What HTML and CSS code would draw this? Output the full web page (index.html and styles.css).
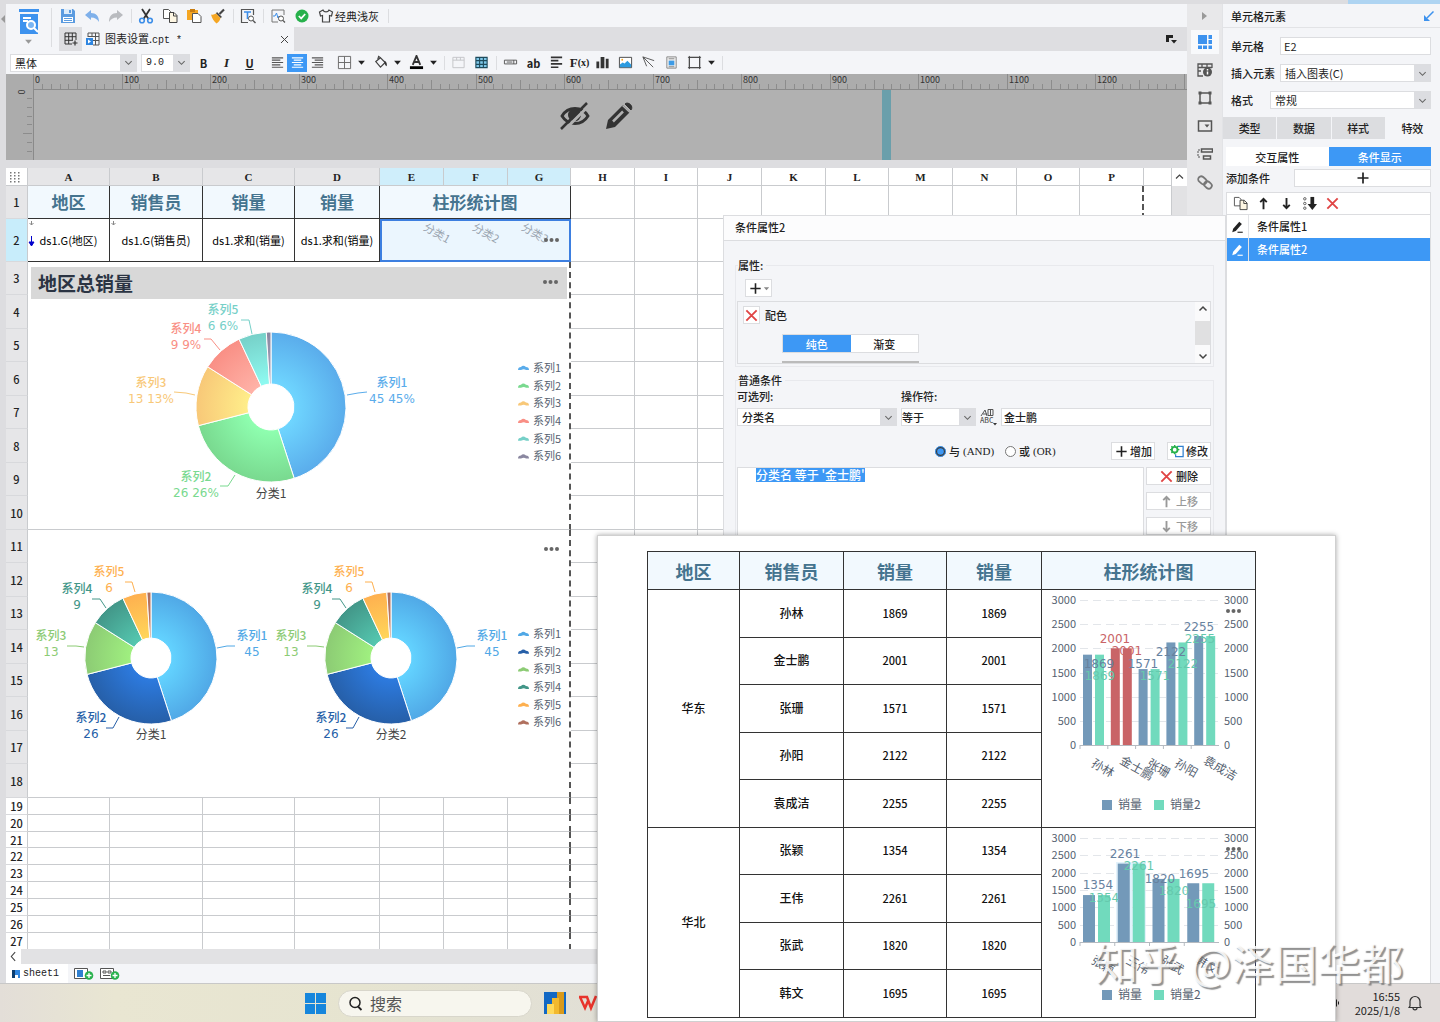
FILE: index.html
```html
<!DOCTYPE html>
<html lang="zh-CN">
<head>
    <meta charset="UTF-8">
    <meta name="viewport" content="width=device-width, initial-scale=1.0">
    <title>图表设置.cpt</title>
    <link rel="stylesheet" href="styles.css">
</head>
<body>
    <svg class="sprite" aria-hidden="true">
        <symbol id="i-chevron" viewBox="0 0 10 10"><path d="M1.500 3.500L5 7l3.500-3.500" fill="none" stroke="#666" stroke-width="1.200"/></symbol>
        <symbol id="i-caret" viewBox="0 0 8 8"><path d="M1 2.500h6L4 6z" fill="currentColor"/></symbol>
        <symbol id="i-save" viewBox="0 0 16 16"><path d="M1 1h12l2 2v12H1z" fill="#5b9be0"/><path d="M4 1h8v5H4z" fill="#dcebfa"/><path d="M9 2h2v3H9z" fill="#5b9be0"/><path d="M3 9h10v5H3z" fill="#fff"/><path d="M4 10.500h8M4 12.500h8" stroke="#5b9be0"/></symbol>
        <symbol id="i-undo" viewBox="0 0 16 16"><path d="M1 7l6-5v3c5 0 8 3 8 9-2-3-4-4.500-8-4.500V12z" fill="#7fb0ea"/></symbol>
        <symbol id="i-redo" viewBox="0 0 16 16"><path d="M15 7L9 2v3c-5 0-8 3-8 9 2-3 4-4.500 8-4.500V12z" fill="#b9bbbf"/></symbol>
        <symbol id="i-cut" viewBox="0 0 16 16"><path d="M4 1l6.500 10M12 1L5.500 11" stroke="#333" stroke-width="1.800"/><circle cx="4" cy="12.500" r="2.300" fill="none" stroke="#3b8de8" stroke-width="1.600"/><circle cx="12" cy="12.500" r="2.300" fill="none" stroke="#3b8de8" stroke-width="1.600"/></symbol>
        <symbol id="i-copy" viewBox="0 0 16 16"><path d="M1.500 1.500h5l2 2v7h-7z" fill="#fff" stroke="#555"/><path d="M7.500 4.500h4.500l3 3v7H7.500z" fill="#fdf6e3" stroke="#444"/><path d="M11.500 4.500v3.500h3.500" fill="none" stroke="#444"/></symbol>
        <symbol id="i-paste" viewBox="0 0 16 16"><path d="M1 2h11v10H1z" fill="#f5a623"/><path d="M4 1h5v3H4z" fill="#c97d10"/><path d="M6.500 5.500H12l3 3v6H6.500z" fill="#fff" stroke="#555"/></symbol>
        <symbol id="i-brush" viewBox="0 0 16 16"><path d="M9.500 6L14 1.500" stroke="#444" stroke-width="2.200"/><path d="M7 4l5 5-1.500 1L6 5.500z" fill="#444"/><path d="M1 6.500c2 .5 3.500 0 5-1l4.500 4.500c-.5 2-1.500 4-4 5.500C4 13.500 2 10.500 1 6.500z" fill="#f5a623"/></symbol>
        <symbol id="i-find" viewBox="0 0 16 16"><path d="M13.500 7V1.500h-12v13H8" fill="none" stroke="#555" stroke-width="1.200"/><path d="M4 4h7M7.500 4v7" stroke="#3b8de8" stroke-width="1.600"/><circle cx="11" cy="10.500" r="2.500" fill="#fff" stroke="#555"/><path d="M13 12.500l2.500 2.500" stroke="#555" stroke-width="1.400"/></symbol>
        <symbol id="i-monitor" viewBox="0 0 16 16"><path d="M14 7V2H2v12h6" fill="none" stroke="#777"/><path d="M3 8h2l1.500-3L8 10l1-2" fill="none" stroke="#3b8de8"/><circle cx="11" cy="10.500" r="2.500" fill="#fff" stroke="#555"/><path d="M13 12.500l2 2" stroke="#555" stroke-width="1.300"/></symbol>
        <symbol id="i-check" viewBox="0 0 16 16"><circle cx="8" cy="8" r="6.500" fill="#27b14c"/><path d="M4.800 8l2.400 2.400 4-4.400" fill="none" stroke="#fff" stroke-width="1.700"/></symbol>
        <symbol id="i-shirt" viewBox="0 0 16 16"><path d="M5 2L1.500 4l1 4L4.500 7.500V14h7V7.500l2 .5 1-4L11 2c-1 2.500-5 2.500-6 0z" fill="none" stroke="#444" stroke-width="1.200"/></symbol>
        <symbol id="i-grid-add" viewBox="0 0 16 16"><path d="M2 2h11v7M2 2v11h7M2 5.700h11M2 9.300h8M5.700 2v11M9.300 2v7" fill="none" stroke="#333"/><path d="M12 9.500v5M9.500 12h5" stroke="#333" stroke-width="1.200"/></symbol>
        <symbol id="i-cpt" viewBox="0 0 16 16"><path d="M3 2h11v12H8M3 2v4M3 5.500h11M8 9.500h6M7 2v4M10.500 2v12" fill="none" stroke="#555"/><path d="M1 7h7v7H1z" fill="#2f86e0"/><path d="M3 8.500l3 2-3 2z" fill="#fff"/></symbol>
        <symbol id="i-left" viewBox="0 0 16 16"><path d="M2 3h12M2 5.500h9M2 8h12M2 10.500h9M2 13h12" stroke="#555" stroke-width="1.200"/></symbol>
        <symbol id="i-center" viewBox="0 0 16 16"><path d="M2 3h12M4 5.500h8M2 8h12M4 10.500h8M2 13h12" stroke="#fff" stroke-width="1.200"/></symbol>
        <symbol id="i-right" viewBox="0 0 16 16"><path d="M2 3h12M5 5.500h9M2 8h12M5 10.500h9M2 13h12" stroke="#555" stroke-width="1.200"/></symbol>
        <symbol id="i-border" viewBox="0 0 16 16"><path d="M1.500 1.500h13v13h-13zM8 1.500v13M1.500 8h13" fill="none" stroke="#666"/></symbol>
        <symbol id="i-fill" viewBox="0 0 16 16"><path d="M3 7l5-4 5 5-5 5zM8 3L6 1.500 5 5" fill="none" stroke="#444" stroke-width="1.300"/><path d="M12 6c3 1 3 4 2.500 6C13 11 12 9 12 6z" fill="#333"/></symbol>
        <symbol id="i-color" viewBox="0 0 16 16"><path d="M1 12h14v3H1z"/><path d="M4 10.500L8 1l4 9.500M5.500 7.500h5" fill="none" stroke="#333" stroke-width="2"/></symbol>
        <symbol id="i-merge" viewBox="0 0 16 16"><path d="M2 2.500h12v11H2zM2 5.500h12M6 2.500v3M10 2.500v3" fill="none" stroke="#c3c4c8"/></symbol>
        <symbol id="i-cells" viewBox="0 0 16 16"><path d="M2 2.500h12v11H2z" fill="#7ec7e8"/><path d="M2 2.500h12v11H2zM2 6h12M2 10h12M6 2.500v11M10 2.500v11" fill="none" stroke="#1e4b5c" stroke-width="1.200"/></symbol>
        <symbol id="i-widget" viewBox="0 0 16 16"><path d="M1.500 5.500h13v4h-13zM4 7.500h6M11.500 5.500v4" fill="none" stroke="#555"/></symbol>
        <symbol id="i-lines" viewBox="0 0 16 16"><path d="M2 2.500h12M2 6h8M2 9.500h12M2 13h8" stroke="#333" stroke-width="1.700"/></symbol>
        <symbol id="i-bars" viewBox="0 0 16 16"><path d="M1.500 7h3v7h-3zM6 2h4v12H6zM11.500 4h3v10h-3z" fill="#333"/></symbol>
        <symbol id="i-image" viewBox="0 0 16 16"><path d="M1.500 2.500h13v11h-13z" fill="#fff" stroke="#444"/><path d="M2 10l3-2 2 1 3-3 4 4v3H2z" fill="#2c9be0"/><circle cx="4.500" cy="5" r="1" fill="#f5a623"/></symbol>
        <symbol id="i-slash" viewBox="0 0 16 16"><path d="M2 2l11 11M2 2l12 4M2 2l4 10" stroke="#555" fill="none"/></symbol>
        <symbol id="i-sub" viewBox="0 0 16 16"><path d="M3 2h10v12H3z" fill="#eee" stroke="#888"/><path d="M5 6h6v5H5z" fill="#3d9be6"/><path d="M5 4h6M5 12.500h6" stroke="#888"/></symbol>
        <symbol id="i-rect" viewBox="0 0 16 16"><path d="M2.500 2.500h11v11h-11zM1 2.500h14M1 13.500h14M2.500 1v14M13.500 1v14" fill="none" stroke="#444"/></symbol>
        <symbol id="i-flag" viewBox="0 0 16 16"><path d="M3 4h7v3H6v4H3z" fill="#222"/><path d="M8 9h6l-3 3.500z" fill="#222"/></symbol>
        <symbol id="i-plus" viewBox="0 0 16 16"><path d="M8 2.500v11M2.500 8h11" stroke="currentColor" stroke-width="1.700"/></symbol>
        <symbol id="i-up" viewBox="0 0 16 16"><path d="M8 14V3M4.500 6.500L8 3l3.500 3.500" fill="none" stroke="currentColor" stroke-width="2"/></symbol>
        <symbol id="i-down" viewBox="0 0 16 16"><path d="M8 2v11M4.500 9.500L8 13l3.500-3.500" fill="none" stroke="currentColor" stroke-width="2"/></symbol>
        <symbol id="i-bottom" viewBox="0 0 16 16"><path d="M11 1v9" stroke="#222" stroke-width="4"/><path d="M6 8.500h10L11 15z" fill="#222"/><g fill="none" stroke="#555"><circle cx="3" cy="3" r="1.300"/><circle cx="3" cy="8" r="1.300"/><circle cx="3" cy="13" r="1.300"/></g></symbol>
        <symbol id="i-cross" viewBox="0 0 16 16"><path d="M2.500 2.500l11 11M13.500 2.500l-11 11" stroke="#e04545" stroke-width="2"/></symbol>
        <symbol id="i-pen" viewBox="0 0 16 16"><path d="M2 14l1-4 7-8 3 2.500-7 8z" fill="currentColor"/><path d="M8 14h6" stroke="currentColor" stroke-width="1.300"/></symbol>
        <symbol id="i-gear" viewBox="0 0 16 16"><path d="M8 2.500h6v11H6V11" fill="none" stroke="#2f7fd0" stroke-width="1.300"/><circle cx="5" cy="6" r="3" fill="#fff" stroke="#27b14c" stroke-width="2"/><path d="M5 1v2M5 9v2M0 6h2M8 6h2M1.500 2.500L3 4M8.500 2.500L7 4M1.500 9.500L3 8" stroke="#27b14c" stroke-width="1.500"/></symbol>
    </svg>

    <main class="workspace">
        <div class="gutter"><svg viewBox="0 0 6 10"><path d="M5 1v8L1 5z" fill="#999"/></svg></div>

        <section class="editor">
            <header class="editor-top">
                <button class="logo" type="button" aria-label="预览">
                    <svg width="20" height="26" viewBox="0 0 20 26"><path d="M0 0h20v3H0zM1 5h18v20H1z" fill="#3d92ee"/><path d="M4 9h8M4 12h5" stroke="#fff" stroke-width="2"/><circle cx="12" cy="16" r="4" fill="#7ab5f3" stroke="#fff" stroke-width="2"/><path d="M15 19l4 4" stroke="#fff" stroke-width="2"/></svg>
                    <svg class="icon-s"><use href="#i-caret"/></svg>
                </button>
                <div class="top-rows">
                    <div class="toolbar">
                        <button type="button" aria-label="保存"><svg class="icon"><use href="#i-save"/></svg></button>
                        <button type="button" aria-label="撤销"><svg class="icon"><use href="#i-undo"/></svg></button>
                        <button type="button" aria-label="重做"><svg class="icon"><use href="#i-redo"/></svg></button>
                        <i class="sep"></i>
                        <button type="button" aria-label="剪切"><svg class="icon"><use href="#i-cut"/></svg></button>
                        <button type="button" aria-label="复制"><svg class="icon"><use href="#i-copy"/></svg></button>
                        <button type="button" aria-label="粘贴"><svg class="icon"><use href="#i-paste"/></svg></button>
                        <button type="button" aria-label="格式刷"><svg class="icon"><use href="#i-brush"/></svg></button>
                        <i class="sep"></i>
                        <button type="button" aria-label="查找"><svg class="icon"><use href="#i-find"/></svg></button>
                        <i class="sep"></i>
                        <button type="button" aria-label="检测"><svg class="icon"><use href="#i-monitor"/></svg></button>
                        <button type="button" aria-label="校验"><svg class="icon"><use href="#i-check"/></svg></button>
                        <button type="button" class="theme"><svg class="icon"><use href="#i-shirt"/></svg>经典浅灰</button>
                        <i class="sep"></i>
                    </div>
                    <div class="file-tabs">
                        <button type="button" class="new-file" aria-label="新建"><svg class="icon"><use href="#i-grid-add"/></svg></button>
                        <div class="file-tab">
                            <svg class="icon"><use href="#i-cpt"/></svg>
                            <span>图表设置.<span class="code">cpt *</span></span>
                            <button type="button" aria-label="关闭"><svg width="9" height="9" viewBox="0 0 9 9"><path d="M1 1l7 7M8 1L1 8" stroke="#444"/></svg></button>
                        </div>
                        <button type="button" class="file-more" aria-label="更多"><svg class="icon"><use href="#i-flag"/></svg></button>
                    </div>
                </div>
            </header>

            <div class="format-bar">
                <label class="select font-name"><select aria-label="字体"><option>黑体</option></select><span><svg class="icon-s"><use href="#i-chevron"/></svg></span></label>
                <label class="select font-size"><select aria-label="字号"><option>9.0</option></select><span><svg class="icon-s"><use href="#i-chevron"/></svg></span></label>
                <button type="button" class="bold">B</button>
                <button type="button" class="italic">I</button>
                <button type="button" class="underline">U</button>
                <div class="align">
                    <button type="button" aria-label="左对齐"><svg class="icon"><use href="#i-left"/></svg></button>
                    <button type="button" class="on" aria-label="居中"><svg class="icon"><use href="#i-center"/></svg></button>
                    <button type="button" aria-label="右对齐"><svg class="icon"><use href="#i-right"/></svg></button>
                </div>
                <button type="button" class="wide" aria-label="边框"><svg class="icon"><use href="#i-border"/></svg><svg class="icon-s"><use href="#i-caret"/></svg></button>
                <button type="button" class="wide" aria-label="填充"><svg class="icon"><use href="#i-fill"/></svg><svg class="icon-s"><use href="#i-caret"/></svg></button>
                <button type="button" class="wide" aria-label="字体颜色"><svg class="icon"><use href="#i-color"/></svg><svg class="icon-s"><use href="#i-caret"/></svg></button>
                <i class="sep"></i>
                <button type="button" aria-label="合并"><svg class="icon"><use href="#i-merge"/></svg></button>
                <button type="button" aria-label="拆分"><svg class="icon"><use href="#i-cells"/></svg></button>
                <i class="sep"></i>
                <button type="button" aria-label="控件"><svg class="icon"><use href="#i-widget"/></svg></button>
                <button type="button" class="ab">ab</button>
                <button type="button" aria-label="富文本"><svg class="icon"><use href="#i-lines"/></svg></button>
                <button type="button" class="fx">F<small>(x)</small></button>
                <button type="button" aria-label="图表"><svg class="icon"><use href="#i-bars"/></svg></button>
                <button type="button" aria-label="图片"><svg class="icon"><use href="#i-image"/></svg></button>
                <button type="button" aria-label="斜线"><svg class="icon"><use href="#i-slash"/></svg></button>
                <button type="button" aria-label="子报表"><svg class="icon"><use href="#i-sub"/></svg></button>
                <button type="button" class="wide" aria-label="形状"><svg class="icon"><use href="#i-rect"/></svg><svg class="icon-s"><use href="#i-caret"/></svg></button>
                <i class="sep"></i>
            </div>

            <div class="param-pane">
                <svg class="ruler-x" id="rulerX"></svg>
                <div class="param-row">
                    <svg class="ruler-y" id="rulerY"></svg>
                    <div class="param-canvas">
                        <svg width="30" height="30" viewBox="0 0 30 30"><path d="M2 15c3-5 7-7.500 13-7.500S25 10 28 15c-3 5-7 7.500-13 7.500S5 20 2 15z" fill="none" stroke="#333" stroke-width="2.800"/><circle cx="14.500" cy="14" r="6.500" fill="#333"/><path d="M4 29.500L29 4.500" stroke="#b1b1b1" stroke-width="3"/><path d="M1 28L27 2" stroke="#333" stroke-width="2.500"/></svg>
                        <svg width="30" height="30" viewBox="0 0 30 30"><path d="M2 28l2-9L19 4l7 7-15 15z" fill="#333"/><path d="M21 3c3-3 9 2 6 6z" fill="#333" stroke="#333"/><path d="M18.500 4.500l7.500 7" stroke="#b1b1b1" stroke-width="1.500"/><path d="M9 20.500l10-10" stroke="#b1b1b1" stroke-width="2.500"/></svg>
                        <i class="param-edge"></i>
                    </div>
                </div>
            </div>

            <div class="sheet">
                <table class="grid" id="grid"></table>
                <div class="scroll-y"><svg width="10" height="10" viewBox="0 0 10 10"><path d="M1.500 6.500L5 3l3.500 3.500" fill="none" stroke="#444" stroke-width="1.200"/></svg></div>
            </div>
            <div class="scroll-x"><svg width="10" height="10" viewBox="0 0 10 10"><path d="M6.500 1L3 5l3.500 4" fill="none" stroke="#444"/></svg></div>
            <footer class="sheet-tabs">
                <button type="button" class="on"><svg width="8" height="8" viewBox="0 0 8 8"><path d="M0 0h8v8H0z" fill="#2f86e0"/><path d="M0 0h3v8H0z" fill="#0c3d70"/><path d="M3 5h3v3H3z" fill="#fff"/></svg><span class="code">sheet1</span></button>
                <button type="button" aria-label="新增表"><svg width="20" height="12" viewBox="0 0 20 12"><path d="M.5.500h13v10H.5z" fill="#fff" stroke="#555"/><path d="M3 2h6v7H3z" fill="#2f7fd0"/><circle cx="15" cy="7.500" r="4.300" fill="#27b14c"/><path d="M15 5v5M12.500 7.500h5" stroke="#fff" stroke-width="1.300"/></svg></button>
                <button type="button" aria-label="新增聚合表"><svg width="20" height="12" viewBox="0 0 20 12"><path d="M.5.500h13v10H.5zM3 3h3v2H3zM8 3h3v2H8zM3 7.500h7" fill="#fff" stroke="#555"/><circle cx="15" cy="7.500" r="4.300" fill="#27b14c"/><path d="M15 5v5M12.500 7.500h5" stroke="#fff" stroke-width="1.300"/></svg></button>
            </footer>
        </section>

        <nav class="rail">
            <button type="button" class="fold" aria-label="收起"><svg width="8" height="10" viewBox="0 0 8 10"><path d="M1 1v8l5-4z" fill="#999"/></svg></button>
            <button type="button" class="on" aria-label="单元格元素"><svg class="icon"><path d="M1 1h9v9H1zM11.500 1H15v4h-3.500zM11.500 6H15v4h-3.500zM1 11.500h4V15H1zM6 11.500h4V15H6zM11.500 11.500H15V15h-3.500z" fill="#3d92ee"/></svg></button>
            <button type="button" aria-label="单元格属性"><svg class="icon"><path d="M15 6V2H1v12h5M1 5.500h14M5 2v3M10 2v3M1 9h3" fill="none" stroke="#555" stroke-width="1.300"/><circle cx="10.500" cy="10" r="4.500" fill="#555"/><path d="M10.500 9.500v3M10.500 7v1.500" stroke="#fff" stroke-width="1.500"/></svg></button>
            <button type="button" aria-label="悬浮元素"><svg class="icon"><path d="M3 3h10v10H3z" fill="none" stroke="#555" stroke-width="1.500"/><path d="M1.500 1.500h3v3h-3zM11.500 1.500h3v3h-3zM1.500 11.500h3v3h-3zM11.500 11.500h3v3h-3z" fill="#555"/></svg></button>
            <button type="button" aria-label="控件设置"><svg class="icon"><path d="M1.500 3h13v10h-13z" fill="none" stroke="#555" stroke-width="1.500"/><path d="M7.500 6.500h5L10 9.500z" fill="#555"/></svg></button>
            <button type="button" aria-label="条件属性"><svg class="icon"><path d="M4.500 3h11v3h-11zM6.500 10h7v3h-7z" fill="none" stroke="#555" stroke-width="1.500"/><path d="M3 4H1v7h3" fill="none" stroke="#555" stroke-dasharray="2 1"/></svg></button>
            <button type="button" aria-label="超级链接"><svg class="icon"><g fill="none" stroke="#777" stroke-width="1.800"><rect x="1" y="3" width="9" height="6" rx="3" transform="rotate(40 5 6)"/><rect x="7" y="8" width="8" height="6" rx="3" transform="rotate(40 11 11)"/></g></svg></button>
        </nav>

        <aside class="props">
            <h2>单元格元素<svg width="10" height="10" viewBox="0 0 10 10"><path d="M9.500.500L3 7" stroke="#3d92ee" stroke-width="1.500"/><path d="M0 4v6h6z" fill="#3d92ee"/></svg></h2>
            <div class="field"><label for="cell">单元格</label><input type="text" id="cell" value="E2"></div>
            <div class="field"><label for="insert">插入元素</label><div class="select"><select id="insert"><option>插入图表(C)</option></select><span><svg class="icon-s"><use href="#i-chevron"/></svg></span></div></div>
            <div class="field"><label for="format" class="short">格式</label><div class="select"><select id="format"><option>常规</option></select><span><svg class="icon-s"><use href="#i-chevron"/></svg></span></div></div>
            <div class="prop-tabs">
                <button type="button">类型</button>
                <button type="button">数据</button>
                <button type="button">样式</button>
                <button type="button" class="on">特效</button>
            </div>
            <div class="toggle">
                <button type="button">交互属性</button>
                <button type="button" class="on">条件显示</button>
            </div>
            <div class="add-row"><span>添加条件</span><button type="button" aria-label="添加条件"><svg class="icon"><use href="#i-plus"/></svg></button></div>
            <div class="cond-list">
                <div class="cond-tools">
                    <button type="button" aria-label="复制"><svg class="icon"><use href="#i-copy"/></svg></button>
                    <button type="button" aria-label="上移"><svg class="icon"><use href="#i-up"/></svg></button>
                    <button type="button" aria-label="下移"><svg class="icon"><use href="#i-down"/></svg></button>
                    <button type="button" aria-label="置底"><svg class="icon"><use href="#i-bottom"/></svg></button>
                    <button type="button" aria-label="删除"><svg class="icon"><use href="#i-cross"/></svg></button>
                </div>
                <button type="button" class="cond"><svg class="icon"><use href="#i-pen"/></svg><span>条件属性1</span></button>
                <button type="button" class="cond on"><svg class="icon"><use href="#i-pen"/></svg><span>条件属性2</span></button>
            </div>
        </aside>
    </main>

    <section class="dialog">
        <h2>条件属性2</h2>
        <div class="dialog-body">
            <fieldset>
                <legend>属性:</legend>
                <button type="button" class="btn add-attr" aria-label="添加属性"><svg class="icon"><use href="#i-plus"/></svg><svg class="icon-s"><use href="#i-caret"/></svg></button>
                <div class="attr-box">
                    <div class="attr">
                        <div class="attr-name"><button type="button" class="btn" aria-label="删除"><svg class="icon"><use href="#i-cross"/></svg></button>配色</div>
                        <div class="toggle">
                            <button type="button" class="on">纯色</button>
                            <button type="button">渐变</button>
                        </div>
                    </div>
                    <div class="attr-scroll">
                        <svg width="10" height="10" viewBox="0 0 10 10"><path d="M1.500 6.500L5 3l3.500 3.500" fill="none" stroke="#444" stroke-width="1.500"/></svg>
                        <i></i>
                        <svg width="10" height="10" viewBox="0 0 10 10"><path d="M1.500 3.500L5 7l3.500-3.500" fill="none" stroke="#444" stroke-width="1.500"/></svg>
                    </div>
                </div>
            </fieldset>
            <fieldset>
                <legend>普通条件</legend>
                <div class="cond-fields">
                    <label for="column" class="c1">可选列:</label>
                    <label for="operator" class="c2">操作符:</label>
                    <div class="select c1"><select id="column"><option>分类名</option></select><span><svg class="icon-s"><use href="#i-chevron"/></svg></span></div>
                    <div class="select c2"><select id="operator"><option>等于</option></select><span><svg class="icon-s"><use href="#i-chevron"/></svg></span></div>
                    <button type="button" class="abc" aria-label="值类型"><svg width="17" height="18" viewBox="0 0 17 18"><path d="M1 8l4-6 2 6M3 6h4M8 1.500h5v6H8zM10.500 1.500v6" fill="none" stroke="#555"/><path d="M13 15h4l-2 2.500z" fill="#333"/><text x="0" y="15" font-size="7" fill="#555">ABC</text></svg></button>
                    <input type="text" value="金士鹏" aria-label="值">
                </div>
                <div class="logic">
                    <label><input type="radio" name="logic" checked>与<span class="mono">(AND)</span></label>
                    <label><input type="radio" name="logic">或<span class="mono">(OR)</span></label>
                    <button type="button" class="btn"><svg class="icon"><use href="#i-plus"/></svg>增加</button>
                    <button type="button" class="btn"><svg class="icon"><use href="#i-gear"/></svg>修改</button>
                </div>
                <div class="expr-row">
                    <div class="expr"><mark>分类名 等于 '金士鹏'</mark></div>
                    <div class="expr-actions">
                        <button type="button" class="btn"><svg class="icon"><use href="#i-cross"/></svg>删除</button>
                        <button type="button" class="btn" disabled><svg class="icon"><use href="#i-up"/></svg>上移</button>
                        <button type="button" class="btn" disabled><svg class="icon"><use href="#i-down"/></svg>下移</button>
                    </div>
                </div>
            </fieldset>
        </div>
    </section>

    <section class="preview">
        <table class="report">
            <colgroup><col class="w-region"><col class="w-person"><col class="w-sum"><col class="w-sum2"><col></colgroup>
            <thead><tr><th>地区</th><th>销售员</th><th>销量</th><th>销量</th><th>柱形统计图</th></tr></thead>
            <tbody id="reportBody"></tbody>
        </table>
    </section>

    <footer class="taskbar">
        <button type="button" aria-label="开始"><svg width="21" height="21" viewBox="0 0 21 21"><path d="M0 0h10v10H0zM11 0h10v10H11zM0 11h10v10H0zM11 11h10v10H11z" fill="#1686dc"/></svg></button>
        <label class="search"><svg width="15" height="15" viewBox="0 0 15 15"><circle cx="7" cy="6.500" r="5" fill="none" stroke="#222" stroke-width="1.500"/><path d="M10 10.500l3.500 3.500" stroke="#222" stroke-width="1.800"/></svg><input type="text" placeholder="搜索" aria-label="搜索"></label>
        <button type="button" aria-label="报表"><svg width="22" height="22" viewBox="0 0 22 22"><path d="M0 0h22v22H0z" fill="#1268c4"/><path d="M13 0h7v22h-7z" fill="#d99a1a"/><path d="M8 6h7v16H8z" fill="#f2b92e"/><path d="M3 12h7v10H3z" fill="#ffd95a"/></svg></button>
        <button type="button" class="wps" aria-label="WPS"><svg width="20" height="18" viewBox="0 0 20 18"><path d="M1 3h9M2 3l5 11 3-7M9 3l4 11 5-12" fill="none" stroke="#e8342c" stroke-width="2.500"/></svg></button>
        <div class="tray">
            <svg width="10" height="8" viewBox="0 0 10 8"><path d="M0 .5h7v7H0z" fill="#222"/><path d="M8 2.500h1v3H8z" fill="#222"/></svg>
            <time>16:55<br>2025/1/8</time>
            <svg width="14" height="16" viewBox="0 0 14 16"><path d="M2 11V6.500a5 5 0 0 1 10 0V11l1 1.500H1zM5 13c0 2.500 4 2.500 4 0" fill="none" stroke="#333" stroke-width="1.200"/></svg>
        </div>
    </footer>

    <div class="watermark">知乎 @泽国华都</div>

    <script src="app.js"></script>
</body>
</html>
```
FILE: styles.css
```css
* {
    box-sizing: border-box;
}

body {
    margin: 0;
    height: 100vh;
    display: flex;
    flex-direction: column;
    overflow: hidden;
    position: relative;
    background: #dddde0;
    color: #222;
    font-family: "Noto Sans CJK SC", sans-serif;
    font-size: 11px;
    line-height: 16px;
}

button, input, select {
    font: inherit;
    color: inherit;
    margin: 0;
    padding: 0;
    border: 0;
    background: none;
    border-radius: 0;
    outline: none;
}

button {
    display: flex;
    align-items: center;
    justify-content: center;
    flex: none;
    white-space: nowrap;
}

h2 {
    margin: 0;
    font-size: 11px;
    font-weight: 500;
}

svg {
    display: block;
    flex: none;
}

.sprite {
    position: absolute;
    width: 0;
    height: 0;
}

.icon {
    width: 16px;
    height: 16px;
}

.icon-s {
    width: 9px;
    height: 9px;
}

.mono {
    font-family: "Liberation Serif", serif;
}

.code {
    font-family: "Liberation Mono", monospace;
    font-size: 10px;
}

.sep {
    width: 1px;
    height: 14px;
    margin: 0 2px 0 3px;
    background: #dcdde0;
    flex: none;
}

/* 下拉框 */
.select {
    display: flex;
    height: 18px;
    border: 1px solid #dcdde0;
    background: #fff;
}

.select select {
    flex: 1;
    min-width: 0;
    padding-left: 4px;
    appearance: none;
}

.select span {
    width: 16px;
    background: #dcdde1;
    display: flex;
    align-items: center;
    justify-content: center;
}

/* 主区域 */
.workspace {
    flex: 1;
    min-height: 0;
    display: flex;
    padding-top: 4px;
    background: linear-gradient(#aed4f2, #aed4f2) top right / 92px 4px no-repeat;
}

.gutter {
    width: 6px;
    padding-top: 10px;
}

.gutter svg {
    width: 6px;
    height: 10px;
}

.editor {
    flex: 1;
    min-width: 0;
    display: flex;
    flex-direction: column;
}

.editor-top {
    display: flex;
    height: 47px;
    background: #f4f5f8;
}

.logo {
    width: 46px;
    height: 39px;
    margin-top: 4px;
    flex-direction: column;
    gap: 2px;
    border-right: 1px solid #dcdde0;
    color: #999;
}

.top-rows {
    flex: 1;
}

.toolbar {
    height: 23px;
    padding-left: 4px;
    display: flex;
    align-items: center;
}

.toolbar button {
    width: 24px;
}

.toolbar .theme {
    width: auto;
    padding: 0 6px 0 4px;
    gap: 1px;
}

.file-tabs {
    height: 24px;
    margin-left: 7px;
    display: flex;
    background: #dedee1;
}

.new-file {
    width: 24px;
    border-right: 1px solid #f4f5f8;
}

.file-tab {
    width: 211px;
    display: flex;
    align-items: center;
    gap: 4px;
    padding: 0 5px 0 2px;
    background: #f4f5f8;
}

.file-tab button {
    margin-left: auto;
}

.file-more {
    margin: 0 8px 0 auto;
}

.format-bar {
    height: 23px;
    display: flex;
    align-items: center;
    background: #f4f5f8;
    padding-left: 4px;
}

.format-bar button {
    width: 23px;
    font-weight: bold;
}

.format-bar .icon {
    width: 15px;
    height: 15px;
}

.font-name {
    width: 127px;
    margin-right: 4px;
}

.font-size {
    width: 49px;
    margin-right: 2px;
}

.font-size select {
    font-family: "Liberation Mono", monospace;
    font-size: 10px;
}

.format-bar .italic {
    font-family: "Liberation Serif", serif;
    font-style: italic;
    font-size: 13px;
}

.format-bar .underline {
    text-decoration: underline;
}

.align {
    display: flex;
    margin: 0 6px;
}

.align button {
    width: 20px;
    height: 18px;
}

.align .on {
    background: #3d98f5;
}

.format-bar .wide {
    width: 36px;
    gap: 5px;
}

.format-bar .fx {
    font-family: "Liberation Serif", serif;
    font-size: 13px;
}

.fx small {
    font-size: 10px;
}

/* 参数面板 */
.param-pane {
    height: 86px;
    background: #b1b1b1;
}

.ruler-x {
    width: 100%;
    height: 15px;
    background: #acacac;
}

.param-row {
    display: flex;
    height: 71px;
}

.ruler-y {
    width: 27px;
    height: 71px;
    background: #acacac;
}

.param-canvas {
    flex: 1;
    display: flex;
    justify-content: center;
    gap: 14px;
    padding: 11px 27px 0 0;
    border-top: 1px solid #8a8a8a;
    border-left: 1px solid #8a8a8a;
    position: relative;
}

.param-edge {
    position: absolute;
    left: 848px;
    top: 0;
    bottom: 0;
    width: 9px;
    background: #6a9fab;
}

/* 表格区 */
.sheet {
    flex: 1;
    min-height: 0;
    margin-top: 8px;
    display: flex;
    align-items: flex-start;
    overflow: hidden;
    background: #fff;
}

.grid {
    flex: 1;
    width: 0;
    table-layout: fixed;
    border-collapse: separate;
    border-spacing: 0;
}

.grid th, .grid td {
    padding: 0;
    border-right: 1px solid #c9cbce;
    border-bottom: 1px solid #c9cbce;
    text-align: center;
    overflow: hidden;
    white-space: nowrap;
    line-height: 14px;
}

.grid thead th {
    height: 18px;
    font-family: "Liberation Serif", serif;
    font-weight: bold;
    background: #fff;
}

.grid thead .used {
    background: #e6e6e8;
}

.grid thead .active {
    background: #cfeefb;
}

.grid tbody th {
    background: #e6e6e8;
    font-weight: 500;
    border-bottom-color: #d8d9dc;
}

.grid tbody th.active {
    background: #c8edfb;
}

.grid tbody th.plain {
    background: #fff;
}

.grid td.head {
    background: #f2f9fe;
    color: #45748f;
    font-size: 17px;
    font-weight: bold;
    border-color: #333;
}

.grid td.bound {
    border-color: #333;
}

.grid td.selected {
    border: 2px solid #3d7fe0;
    background: #ebf6fe;
}

.grid td.page-break {
    border-right: 2px dashed #555;
}

.grid td.chart {
    vertical-align: top;
}

.chart-title {
    height: 32px;
    margin: 5px 2px 0 3px;
    padding: 0 7px;
    display: flex;
    align-items: center;
    justify-content: space-between;
    background: #d8d8d8;
    color: #2b3443;
    font-size: 19px;
    font-weight: bold;
}

.chart svg {
    width: 100%;
}

.chart .chart-title svg {
    width: 18px;
}

.scroll-y {
    width: 15px;
    align-self: stretch;
    background: #e2e2e4;
}

.scroll-y svg {
    width: 15px;
    height: 18px;
    padding: 4px 2px;
    background: #fff;
}

.scroll-x {
    height: 15px;
    background: #e2e2e4;
}

.scroll-x svg {
    width: 15px;
    height: 15px;
    padding: 2px;
    background: #fff;
}

.sheet-tabs {
    height: 19px;
    display: flex;
    align-items: center;
    gap: 6px;
    background: #f4f5f8;
}

.sheet-tabs .on {
    height: 19px;
    padding: 0 9px 0 6px;
    gap: 3px;
    background: #fff;
}

/* 右侧图标栏 */
.rail {
    width: 35px;
    background: #e8e8ea;
    display: flex;
    flex-direction: column;
    align-items: center;
    gap: 4px;
    padding-top: 2px;
}

.rail button {
    width: 28px;
    height: 24px;
}

.rail .fold {
    height: 20px;
}

.rail .on {
    background: #f8f9fb;
}

/* 属性面板 */
.props {
    width: 218px;
    background: #f4f5f8;
    display: flex;
    flex-direction: column;
    border-left: 1px solid #e2e3e6;
}

.props h2 {
    height: 24px;
    padding: 0 6px 0 8px;
    display: flex;
    align-items: center;
    justify-content: space-between;
    border-bottom: 1px solid #e2e3e6;
}

.field {
    display: flex;
    align-items: center;
    height: 18px;
    margin: 9px 9px 0 8px;
}

.field label {
    width: 49px;
    font-weight: 500;
    white-space: nowrap;
}

.field .short {
    width: 39px;
}

.field input {
    flex: 1;
    min-width: 0;
    height: 18px;
    padding-left: 3px;
    border: 1px solid #dcdde0;
    background: #fff;
}

.field .select {
    flex: 1;
    min-width: 0;
}

.prop-tabs {
    display: flex;
    margin-top: 8px;
    height: 22px;
}

.prop-tabs button {
    flex: 1;
    background: #dcdde0;
    border-right: 1px solid #f4f5f8;
    font-weight: 500;
}

.prop-tabs .on {
    background: none;
}

.toggle {
    display: flex;
    height: 19px;
    background: #fff;
}

.toggle button {
    flex: 1;
    font-weight: 500;
}

.toggle .on {
    background: #3d98f5;
    color: #fff;
}

.props .toggle {
    margin: 8px 9px 3px 3px;
}

.add-row {
    display: flex;
    align-items: center;
    justify-content: space-between;
    margin: 0 9px 5px 3px;
    font-weight: 500;
}

.add-row button {
    width: 137px;
    height: 18px;
    border: 1px solid #dcdde0;
    background: #fff;
}

.cond-list {
    flex: 1;
    margin: 0 9px 0 3px;
    border: 1px solid #dcdde0;
    border-bottom: 0;
    background: #fff;
}

.cond-tools {
    height: 22px;
    display: flex;
    align-items: center;
    padding-left: 2px;
    border-bottom: 1px solid #dcdde0;
}

.cond-tools button {
    width: 23px;
}

.cond-tools .icon {
    width: 15px;
    height: 15px;
}

.cond {
    width: 100%;
    height: 23px;
    justify-content: flex-start;
    font-weight: 500;
}

.cond .icon {
    width: 21px;
    height: 14px;
}

.cond span {
    height: 23px;
    line-height: 22px;
    padding-left: 8px;
    border-left: 1px solid #e2e3e6;
}

.cond.on {
    background: #3d98f5;
    color: #fff;
}

/* 条件属性窗口 */
.dialog {
    position: absolute;
    left: 723px;
    top: 215px;
    width: 503px;
    height: 326px;
    overflow: hidden;
    background: #f4f5f8;
    border: 1px solid #dcdde0;
    font-weight: 500;
}

.dialog h2 {
    height: 25px;
    line-height: 23px;
    padding-left: 11px;
    background: #fcfcfd;
    border-bottom: 1px solid #dcdde0;
}

.dialog-body {
    padding: 16px 11px 0 11px;
}

fieldset {
    min-width: 0;
    margin: 0 0 5px;
    padding: 0 2px 2px 1px;
    border: 1px solid #e8e9ed;
}

legend {
    margin-left: 1px;
    padding: 0 3px 0 0;
}

.btn {
    height: 18px;
    border: 1px solid #dcdde0;
    background: #fff;
    font-weight: 500;
}

.btn:disabled {
    color: #999;
}

.add-attr {
    width: 27px;
    margin: 6px 0 4px 8px;
}

.add-attr .icon-s {
    width: 7px;
    height: 7px;
    color: #888;
}

.attr-box {
    display: flex;
    height: 63px;
    border: 1px solid #dcdde0;
    overflow: hidden;
}

.attr {
    flex: 1;
}

.attr-name {
    display: flex;
    align-items: center;
    gap: 5px;
    padding: 4px 5px 10px;
}

.attr .toggle {
    width: 137px;
    margin-left: 44px;
    border: 1px solid #dcdde0;
}

.attr::after {
    content: "";
    display: block;
    width: 137px;
    height: 2px;
    margin: 8px 0 0 44px;
    background: #bbb;
}

.attr-scroll {
    width: 15px;
    display: flex;
    flex-direction: column;
    align-items: center;
    justify-content: space-between;
    padding: 2px 0;
    background: #fafafb;
}

.attr-scroll i {
    width: 15px;
    height: 24px;
    background: #e0e0e1;
}

.cond-fields {
    display: grid;
    grid-template-columns: 160px 75px 17px 1fr;
    column-gap: 4px;
    row-gap: 4px;
}

.cond-fields .c1 {
    grid-column: 1;
}

.cond-fields .c2 {
    grid-column: 2;
}

.cond-fields label.c2 {
    grid-column: 2 / 5;
}

.cond-fields .c2 select {
    padding-left: 0;
}

.cond-fields input {
    min-width: 0;
    height: 18px;
    padding-left: 2px;
    border: 1px solid #dcdde0;
    background: #fff;
}

.logic {
    display: flex;
    align-items: center;
    gap: 12px;
    margin: 16px 0 7px 198px;
}

.logic label {
    display: flex;
    align-items: center;
    gap: 3px;
    width: 58px;
}

.logic input {
    width: 11px;
    height: 11px;
    accent-color: #3d98f5;
}

.logic .btn {
    width: 44px;
    gap: 1px;
}

.logic .btn:nth-of-type(1) {
    margin-left: auto;
}

.expr-row {
    display: flex;
    gap: 2px;
}

.expr {
    flex: 1;
    height: 120px;
    padding-left: 18px;
    border: 1px solid #dcdde0;
    background: #fff;
    font-size: 12px;
    line-height: 14px;
}

.expr mark {
    display: inline-block;
    height: 14px;
    background: #3d98f5;
    color: #fff;
}

.expr-actions {
    width: 65px;
    display: flex;
    flex-direction: column;
    gap: 7px;
}

.expr-actions .btn {
    gap: 2px;
}

.dialog .btn .icon {
    width: 15px;
    height: 15px;
}

/* 预览窗口 */
.preview {
    position: absolute;
    left: 597px;
    top: 535px;
    width: 739px;
    bottom: 0;
    padding: 15px 79px 0 49px;
    background: #fff;
    border: 1px solid #d0d0d0;
    box-shadow: 0 0 5px rgba(0, 0, 0, 0.35);
    z-index: 2;
    overflow: hidden;
}

.report {
    width: 100%;
    table-layout: fixed;
    border-collapse: collapse;
    color: #111;
    text-align: center;
}

.w-region {
    width: 92px;
}

.w-person {
    width: 104px;
}

.w-sum {
    width: 103px;
}

.w-sum2 {
    width: 95px;
}

.report th, .report td {
    padding: 0;
    border: 1px solid #333;
    font-weight: 500;
    line-height: 14px;
}

.report th {
    height: 38px;
    background: #f2f9fe;
    color: #45748f;
    font-size: 18px;
    font-weight: bold;
}

.report td {
    height: 48px;
    padding-bottom: 2px;
}

.report tr:nth-child(even) td {
    height: 47px;
}

.report .name {
    font-size: 12px;
}

.report .plot {
    vertical-align: top;
    padding: 0;
}

/* 任务栏 */
.taskbar {
    height: 39px;
    display: flex;
    align-items: center;
    gap: 12px;
    padding: 0 18px 0 305px;
    border-top: 1px solid #c8c8c8;
    background: linear-gradient(90deg, #e3ded8 0, #e9e6d2 8%, #e6e4d0 25%, #e1dfd6 42%, #e1dcda 90%);
}

.search {
    width: 194px;
    height: 27px;
    display: flex;
    align-items: center;
    gap: 7px;
    padding: 0 9px;
    border: 1px solid #d8d6cb;
    border-radius: 14px;
    background: #f7f6ee;
}

.search input {
    width: 120px;
    font-size: 16px;
    line-height: 20px;
}

.search input::placeholder {
    color: #555;
}

.tray {
    margin-left: auto;
    display: flex;
    align-items: center;
    gap: 8px;
}

.tray time {
    width: 52px;
    text-align: right;
    line-height: 14px;
}

.watermark {
    position: absolute;
    left: 1095px;
    top: 930px;
    z-index: 3;
    color: rgba(255, 255, 255, 0.85);
    font-size: 43px;
    line-height: 62px;
    white-space: nowrap;
    text-shadow: 2px 2px 1px rgba(110, 110, 110, 0.75);
}
```
FILE: app.js
```js
const FONT_NUM = 'DejaVu Sans, sans-serif';

function text(x, y, str, opts = {}) {
    const { size = 12, fill = '#555f70', anchor = 'middle', weight = 400, font = '', rotate = 0 } = opts;
    const turn = rotate ? ` transform="rotate(${rotate} ${x} ${y})"` : '';
    const family = font ? ` font-family="${font}"` : '';
    return `<text x="${x}" y="${y}" dy="0.36em" font-size="${size}" fill="${fill}" text-anchor="${anchor}" font-weight="${weight}"${family}${turn}>${str}</text>`;
}

function dots(x, y) {
    return [0, 5.5, 11].map(d => `<circle cx="${x + d}" cy="${y}" r="2" fill="#666"/>`).join('');
}

// 环形图
const VALUES = [45, 26, 13, 9, 6, 1];

function pie(id, cx, cy, R, r, colors) {
    let out = '';
    let sum = 0;
    VALUES.forEach((v, i) => {
        const a = sum / 100 * Math.PI * 2;
        sum += v;
        const b = sum / 100 * Math.PI * 2;
        const p = (rad, t) => `${(cx + rad * Math.sin(t)).toFixed(2)} ${(cy - rad * Math.cos(t)).toFixed(2)}`;
        out += `<radialGradient id="${id}${i}" gradientUnits="userSpaceOnUse" cx="${cx}" cy="${cy}" r="${R}"><stop offset="0.3" stop-color="${colors[i][0]}"/><stop offset="1" stop-color="${colors[i][1]}"/></radialGradient>`;
        out += `<path d="M${p(R, a)}A${R} ${R} 0 0 1 ${p(R, b)}L${p(r, b)}A${r} ${r} 0 0 0 ${p(r, a)}z" fill="url(#${id}${i})" stroke="#fff"/>`;
    });
    return out;
}

// 标签与引线，坐标相对圆心
function pieLabels(cx, cy, labels, lines, colors, percent) {
    return labels.map(([x, y], i) => {
        const c = colors[i][1];
        const pts = lines[i].map(([px, py]) => `${cx + px},${cy + py}`).join(' ');
        const value = percent ? `${VALUES[i]} ${VALUES[i]}%` : VALUES[i];
        return `<polyline points="${pts}" fill="none" stroke="${c}"/>`
            + text(cx + x, cy + y, `系列${i + 1}`, { fill: c, weight: 500 })
            + text(cx + x, cy + y + 16, value, { fill: c, font: FONT_NUM });
    }).join('');
}

function pieLegend(x, y, colors) {
    return colors.map((c, i) => {
        const ly = y + i * 17.7;
        return `<path d="M${x} ${ly + 2}q0-3 3-3q2-2.500 5 0q3 0 3 3h-3q-2-1.500-5 0z" fill="${c[1]}"/>`
            + text(x + 15, ly, `系列${i + 1}`, { size: 11, anchor: 'start' });
    }).join('');
}

const SOFT = [['#6fd6ff', '#5aaceb'], ['#8fffb0', '#79d98f'], ['#ffee8a', '#f8c878'], ['#ffb3a8', '#f98f85'], ['#8ffbf2', '#76d0c8'], ['#aaa6c0', '#8a87a0']];
const DEEP = [['#63d3ff', '#50a8e6'], ['#2d7be0', '#265fa8'], ['#a0f080', '#8ccb74'], ['#55c8b0', '#429688'], ['#ffd65a', '#feb04f'], ['#c07a60', '#b0705e']];

function bigPie() {
    const labels = [[121, -24], [-75, 70], [-120, -24], [-85, -78], [-48, -97]];
    const lines = [
        [[76, -12], [87, -14], [96, -15]],
        [[-36, 68], [-43, 79], [-51, 79]],
        [[-76, -12], [-85, -14], [-97, -15]],
        [[-51, -57], [-60, -68], [-67, -68]],
        [[-19, -73], [-22, -87], [-30, -87]]
    ];
    return `<div class="chart-title">地区总销量<svg height="8">${dots(3, 3)}</svg></div>
        <svg height="229">${pie('a', 243, 108, 75, 23, SOFT)}${pieLabels(243, 108, labels, lines, SOFT, true)}
        ${text(243, 195, '分类1', { fill: '#444' })}${pieLegend(490, 69, SOFT)}</svg>`;
}

function twoPies() {
    const labels = [[101, -22], [-60, 60], [-100, -22], [-74, -69], [-42, -86]];
    const lines = [
        [[66, -10], [76, -12], [84, -12]],
        [[-32, 59], [-38, 70], [-45, 70]],
        [[-67, -11], [-75, -12], [-84, -12]],
        [[-45, -50], [-51, -59], [-59, -59]],
        [[-16, -66], [-19, -76], [-26, -76]]
    ];
    const one = (id, cx, name) => pie(id, cx, 128, 66, 20, DEEP)
        + pieLabels(cx, 128, labels, lines, DEEP, false)
        + text(cx, 205, name, { fill: '#444' });
    return `<svg height="264">${one('b', 123, '分类1')}${one('c', 363, '分类2')}${pieLegend(490, 104, DEEP)}${dots(518, 19)}</svg>`;
}

// 设计表格
const COLS = 'ABCDEFGHIJKLMNOP'.split('');
const WIDTHS = [82, 93, 92, 85, 64, 64, 63, 64, 63, 64, 64, 63, 64, 64, 63, 64];

function emptyCells(from) {
    let out = '';
    for (let i = from; i < COLS.length; i++) {
        const brk = COLS[i] === 'G' || COLS[i] === 'P' ? ' class="page-break"' : '';
        out += `<td${brk}></td>`;
    }
    return out + '<td></td>';
}

function buildGrid() {
    let html = '<colgroup><col style="width:22px">' + WIDTHS.map(w => `<col style="width:${w}px">`).join('') + '<col></colgroup>';
    html += '<thead><tr><th><svg width="20" height="12">';
    for (let i = 0; i < 12; i++) {
        html += `<rect x="${4 + (i % 3) * 4}" y="${1 + Math.floor(i / 3) * 3}" width="1.500" height="1.500" fill="#777"/>`;
    }
    html += '</svg></th>' + COLS.map((c, i) => `<th class="${i < 4 ? 'used' : i < 7 ? 'active' : ''}">${c}</th>`).join('') + '<th></th></tr></thead><tbody>';

    for (let n = 1; n <= 27; n++) {
        let h = n === 1 ? 33 : n === 2 ? 43 : n > 18 ? 17 : n % 2 ? 33 : 34;
        if (n === 21) h -= 1;
        html += `<tr style="height:${h}px"><th class="${n === 2 ? 'active' : n > 18 ? 'plain' : ''}">${n}</th>`;
        if (n === 1) {
            html += ['地区', '销售员', '销量', '销量'].map(t => `<td class="head">${t}</td>`).join('') + '<td class="head" colspan="3">柱形统计图</td>' + emptyCells(7);
        } else if (n === 2) {
            html += ['G(地区)', 'G(销售员)', '求和(销量)', '求和(销量)'].map((t, i) => {
                const arrow = i === 0 ? '<path d="M3.500 16v9M1 22h5l-2.500 4z" stroke="#00c" fill="#00c"/>' : '';
                const mark = i < 2 ? '<path d="M3.500 1v4M1.500 3l2 2 2-2" stroke="#888" fill="none"/>' : '';
                return `<td class="bound"><svg width="100%" height="40">${mark}${arrow}<text x="50%" y="25" font-size="11" text-anchor="middle">ds1.${t}</text></svg></td>`;
            }).join('');
            html += '<td class="selected" colspan="3"><svg width="100%" height="38">'
                + [55, 104, 153].map((x, i) => text(x, 11, `分类${i + 1}`, { size: 11, fill: '#98a3ae', rotate: 30 })).join('')
                + dots(164, 18) + '</svg></td>' + emptyCells(7);
        } else if (n === 3 || n === 11) {
            html += `<td class="chart page-break" colspan="7" rowspan="8">${n === 3 ? bigPie() : twoPies()}</td>` + emptyCells(7);
        } else {
            html += emptyCells(n < 19 ? 7 : 0);
        }
        html += '</tr>';
    }
    document.getElementById('grid').innerHTML = html + '</tbody>';
}

// 标尺
function buildRulers() {
    const step = 8.85;
    let x = '';
    for (let i = 0; i < 131; i++) {
        const px = Math.round(27 + i * step);
        const len = i % 10 === 0 ? 15 : i % 5 === 0 ? 9 : 5;
        x += `<path d="M${px}.5 15v-${len}" stroke="#8c8c8c"/>`;
        if (i % 10 === 0 && i < 130) x += text(px + 2, 6, i * 10, { size: 9, fill: '#333', anchor: 'start' });
    }
    document.getElementById('rulerX').innerHTML = x;
    let y = text(16, 3, '0', { size: 9, fill: '#333', rotate: -90 });
    for (let i = 1; i < 8; i++) {
        y += `<path d="M26 ${Math.round(i * step)}.5h-${i === 5 ? 9 : 5}" stroke="#8c8c8c"/>`;
    }
    document.getElementById('rulerY').innerHTML = y;
}

// 柱形图
function barChart(o) {
    const left = 38, right = 177;
    const y = v => o.base - (o.base - 10) * v / 3000;
    let out = o.band ? `<rect x="${o.band}" y="34" width="30" height="${o.base - 34}" fill="#e3f2fb"/>` : '';
    for (let v = 0; v <= 3000; v += 500) {
        const gy = Math.round(y(v));
        out += `<path d="M${left} ${gy}.5H${right}" stroke="${v ? '#e3e6ea' : '#b5bac0'}"${v ? ' stroke-dasharray="8 5"' : ''}/>`;
        out += text(34, gy, v, { size: 11, anchor: 'end' }) + text(182, gy, v, { size: 11, anchor: 'start' });
    }
    const pitch = (right - left) / o.rows.length;
    o.rows.forEach(([name, v], i) => {
        const x = left + pitch * i;
        const hot = name === '金士鹏';
        const top = y(v);
        [['#7399b9', 0], ['#71dabd', o.bar + 3]].forEach(([c, dx]) => {
            out += `<rect x="${x + 3 + dx}" y="${top}" width="${o.bar}" height="${o.base - top}" fill="${hot ? '#c96467' : c}"/>`;
        });
        out += `<path d="M${x} ${o.base}v4" stroke="#b5bac0"/>`;
        out += text(x + 23 + (name.length > 2 ? 6 : 0), o.base + 23, name, { rotate: 30 });
    });
    out += o.labels.map(([lx, ly, i, second]) => text(lx, ly, o.rows[i][1], {
        fill: i === o.hot ? '#c96467' : second ? '#65c9ad' : '#67829f', font: FONT_NUM
    })).join('');
    out += dots(186, 21);
    const ly = o.legend;
    out += `<rect x="60" y="${ly - 5}" width="10" height="10" fill="#7399b9"/>` + text(76, ly, '销量', { anchor: 'start' });
    out += `<rect x="112" y="${ly - 5}" width="10" height="10" fill="#71dabd"/>` + text(128, ly, '销量2', { anchor: 'start' });
    return `<svg width="100%" height="${o.height}">${out}</svg>`;
}

const REGIONS = [
    {
        name: '华东', base: 155, bar: 9, legend: 215, height: 236, hot: 1,
        rows: [['孙林', 1869], ['金士鹏', 2001], ['张珊', 1571], ['孙阳', 2122], ['袁成洁', 2255]],
        labels: [[57, 74, 0], [58, 86, 0, 1], [73, 49, 1], [85, 61, 1, 1], [101, 74, 2], [113, 86, 2, 1], [129, 62, 3], [141, 74, 3, 1], [157, 37, 4], [158, 49, 4, 1]]
    },
    {
        name: '华北', base: 114, bar: 12, legend: 167, height: 188, band: 74,
        rows: [['张颖', 1354], ['王伟', 2261], ['张武', 1820], ['韩文', 1695]],
        labels: [[56, 57, 0], [62, 70, 0, 1], [83, 26, 1], [97, 38, 1, 1], [118, 51, 2], [132, 63, 2, 1], [152, 46, 3], [159, 76, 3, 1]]
    }
];

function buildReport() {
    document.getElementById('reportBody').innerHTML = REGIONS.map(reg => reg.rows.map(([name, v], i) => {
        const span = `rowspan="${reg.rows.length}"`;
        return '<tr>'
            + (i === 0 ? `<td class="name" ${span}>${reg.name}</td>` : '')
            + `<td class="name">${name}</td><td>${v}</td><td>${v}</td>`
            + (i === 0 ? `<td class="plot" ${span}>${barChart(reg)}</td>` : '')
            + '</tr>';
    }).join('')).join('');
}

buildGrid();
buildRulers();
buildReport();
```
